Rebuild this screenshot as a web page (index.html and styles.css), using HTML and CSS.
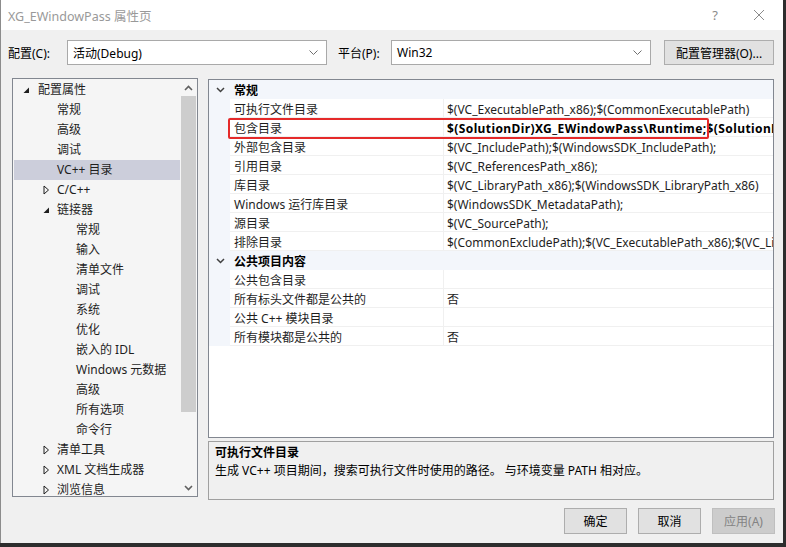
FILE: index.html
```html
<!DOCTYPE html>
<html lang="zh-CN">
<head>
    <meta charset="UTF-8">
    <title>XG_EWindowPass 属性页</title>
    <link rel="stylesheet" href="styles.css">
</head>
<body>
    <div class="window">
        <div class="titlebar">
            <span class="title">XG_EWindowPass 属性页</span>
            <span class="help">?</span>
            <svg class="close" width="12" height="12" viewBox="0 0 12 12"><path d="M1 1L11 11M11 1L1 11" stroke="#8a8a8a" stroke-width="1" fill="none"/></svg>
        </div>

        <div class="toolbar">
            <span class="label cfg">配置(C):</span>
            <div class="combo">
                <span>活动(Debug)</span>
                <svg width="9" height="5" viewBox="0 0 9 5"><path d="M0.5 0.5L4.5 4.5L8.5 0.5" stroke="#707070" fill="none"/></svg>
            </div>
            <span class="label plat">平台(P):</span>
            <div class="combo">
                <span>Win32</span>
                <svg width="9" height="5" viewBox="0 0 9 5"><path d="M0.5 0.5L4.5 4.5L8.5 0.5" stroke="#707070" fill="none"/></svg>
            </div>
            <button class="btn cfg-btn">配置管理器(O)...</button>
        </div>

        <div class="main">
            <div class="tree">
                <div class="tree-list">
                    <div class="node l0"><span class="twisty"><svg width="7" height="7" viewBox="0 0 7 7"><path d="M6 0.5V6H0.5Z" fill="#1e1e1e"/></svg></span>配置属性</div>
                    <div class="node l1"><span class="twisty"></span>常规</div>
                    <div class="node l1"><span class="twisty"></span>高级</div>
                    <div class="node l1"><span class="twisty"></span>调试</div>
                    <div class="node l1 selected"><span class="twisty"></span>VC++ 目录</div>
                    <div class="node l1"><span class="twisty"><svg width="7" height="10" viewBox="0 0 7 10"><path d="M1 1V9L5.5 5Z" stroke="#1e1e1e" fill="none"/></svg></span>C/C++</div>
                    <div class="node l1"><span class="twisty"><svg width="7" height="7" viewBox="0 0 7 7"><path d="M6 0.5V6H0.5Z" fill="#1e1e1e"/></svg></span>链接器</div>
                    <div class="node l2"><span class="twisty"></span>常规</div>
                    <div class="node l2"><span class="twisty"></span>输入</div>
                    <div class="node l2"><span class="twisty"></span>清单文件</div>
                    <div class="node l2"><span class="twisty"></span>调试</div>
                    <div class="node l2"><span class="twisty"></span>系统</div>
                    <div class="node l2"><span class="twisty"></span>优化</div>
                    <div class="node l2"><span class="twisty"></span>嵌入的 IDL</div>
                    <div class="node l2"><span class="twisty"></span>Windows 元数据</div>
                    <div class="node l2"><span class="twisty"></span>高级</div>
                    <div class="node l2"><span class="twisty"></span>所有选项</div>
                    <div class="node l2"><span class="twisty"></span>命令行</div>
                    <div class="node l1"><span class="twisty"><svg width="7" height="10" viewBox="0 0 7 10"><path d="M1 1V9L5.5 5Z" stroke="#1e1e1e" fill="none"/></svg></span>清单工具</div>
                    <div class="node l1"><span class="twisty"><svg width="7" height="10" viewBox="0 0 7 10"><path d="M1 1V9L5.5 5Z" stroke="#1e1e1e" fill="none"/></svg></span>XML 文档生成器</div>
                    <div class="node l1"><span class="twisty"><svg width="7" height="10" viewBox="0 0 7 10"><path d="M1 1V9L5.5 5Z" stroke="#1e1e1e" fill="none"/></svg></span>浏览信息</div>
                </div>
                <div class="scrollbar">
                    <div class="arrow"><svg width="9" height="6" viewBox="0 0 9 6"><path d="M1 5L4.5 1.5L8 5" stroke="#606060" stroke-width="1.6" fill="none"/></svg></div>
                    <div class="track"><div class="thumb"></div></div>
                    <div class="arrow"><svg width="9" height="6" viewBox="0 0 9 6"><path d="M1 1L4.5 4.5L8 1" stroke="#606060" stroke-width="1.6" fill="none"/></svg></div>
                </div>
            </div>

            <div class="side">
                <div class="grid">
                    <div class="row category">
                        <span class="gutter"><svg width="9" height="6" viewBox="0 0 9 6"><path d="M1 1L4.5 4.5L8 1" stroke="#404040" stroke-width="1.5" fill="none"/></svg></span>
                        <span class="cat-name">常规</span>
                    </div>
                    <div class="row"><span class="gutter"></span><span class="name">可执行文件目录</span><span class="value">$(VC_ExecutablePath_x86);$(CommonExecutablePath)</span></div>
                    <div class="row"><span class="gutter"></span><span class="name">包含目录</span><span class="value bold">$(SolutionDir)XG_EWindowPass\Runtime;$(SolutionDir)XG_EWindowPass\Include;$(IncludePath)</span></div>
                    <div class="row"><span class="gutter"></span><span class="name">外部包含目录</span><span class="value">$(VC_IncludePath);$(WindowsSDK_IncludePath);</span></div>
                    <div class="row"><span class="gutter"></span><span class="name">引用目录</span><span class="value">$(VC_ReferencesPath_x86);</span></div>
                    <div class="row"><span class="gutter"></span><span class="name">库目录</span><span class="value">$(VC_LibraryPath_x86);$(WindowsSDK_LibraryPath_x86)</span></div>
                    <div class="row"><span class="gutter"></span><span class="name">Windows 运行库目录</span><span class="value">$(WindowsSDK_MetadataPath);</span></div>
                    <div class="row"><span class="gutter"></span><span class="name">源目录</span><span class="value">$(VC_SourcePath);</span></div>
                    <div class="row"><span class="gutter"></span><span class="name">排除目录</span><span class="value">$(CommonExcludePath);$(VC_ExecutablePath_x86);$(VC_LibraryPath_x86)</span></div>
                    <div class="row category">
                        <span class="gutter"><svg width="9" height="6" viewBox="0 0 9 6"><path d="M1 1L4.5 4.5L8 1" stroke="#404040" stroke-width="1.5" fill="none"/></svg></span>
                        <span class="cat-name">公共项目内容</span>
                    </div>
                    <div class="row"><span class="gutter"></span><span class="name">公共包含目录</span><span class="value"></span></div>
                    <div class="row"><span class="gutter"></span><span class="name">所有标头文件都是公共的</span><span class="value">否</span></div>
                    <div class="row"><span class="gutter"></span><span class="name">公共 C++ 模块目录</span><span class="value"></span></div>
                    <div class="row"><span class="gutter"></span><span class="name">所有模块都是公共的</span><span class="value">否</span></div>
                    <div class="highlight"></div>
                </div>
                <div class="desc">
                    <div class="desc-title">可执行文件目录</div>
                    <div class="desc-text">生成 VC++ 项目期间，搜索可执行文件时使用的路径。 与环境变量 PATH 相对应。</div>
                </div>
            </div>
        </div>

        <div class="footer">
            <button class="btn">确定</button>
            <button class="btn">取消</button>
            <button class="btn disabled">应用(A)</button>
        </div>
    </div>
</body>
</html>
```

FILE: styles.css
```css
body {
    margin: 0;
    width: 786px;
    height: 547px;
    overflow: hidden;
    background: #2d2d2d;
    font-family: "Noto Sans", "Noto Sans CJK SC", sans-serif;
    font-size: 12px;
    color: #000;
}

.window {
    width: 782px;
    height: 543px;
    background: #f0f0f0;
    border-left: 1px solid #8c8c8c;
    overflow: hidden;
}

.titlebar {
    height: 30px;
    background: #fff;
    display: flex;
    align-items: center;
    padding: 0 18px 0 7px;
}

.titlebar .title {
    color: #999;
    font-size: 12.5px;
    flex: 1;
}

.titlebar .help {
    color: #8a8a8a;
    font-size: 13px;
    margin-right: 35px;
}

.toolbar {
    display: flex;
    align-items: center;
    height: 25px;
    margin-top: 10px;
    padding-left: 7px;
}

.label.cfg {
    width: 59px;
}

.label.plat {
    width: 53px;
    margin-left: 11px;
}

.combo {
    width: 260px;
    height: 25px;
    box-sizing: border-box;
    background: #fff;
    border: 1px solid #a9a9a9;
    display: flex;
    align-items: center;
    justify-content: space-between;
    padding: 0 8px 0 5px;
}

.btn {
    font-family: inherit;
    font-size: 12px;
    color: #000;
    background: #e1e1e1;
    border: 1px solid #adadad;
    height: 26px;
    padding: 0;
}

.cfg-btn {
    width: 110px;
    height: 25px;
    margin-left: 13px;
}

.main {
    display: flex;
    margin-top: 13px;
    padding-left: 11px;
}

.tree {
    width: 186px;
    height: 419px;
    box-sizing: border-box;
    border: 1px solid #828790;
    background: #f5f5f5;
    display: flex;
}

.tree-list {
    width: 167px;
    padding-top: 1px;
    overflow: hidden;
}

.node {
    height: 20px;
    line-height: 20px;
    display: flex;
    align-items: center;
    white-space: nowrap;
    color: #1e1e1e;
}

.node.l0 { padding-left: 8px; }
.node.l1 { padding-left: 27px; }
.node.l2 { padding-left: 46px; }

.node.selected {
    background: #cccedb;
    margin-left: 1px;
    padding-left: 26px;
}

.twisty {
    width: 17px;
    height: 20px;
    display: flex;
    align-items: center;
    padding-left: 2px;
    box-sizing: border-box;
}

.node.l1 .twisty { padding-left: 3px; }

.scrollbar {
    width: 17px;
    display: flex;
    flex-direction: column;
}

.scrollbar .arrow {
    height: 17px;
    display: flex;
    align-items: center;
    justify-content: center;
}

.scrollbar .track {
    flex: 1;
    padding: 0 1px;
}

.scrollbar .thumb {
    height: 316px;
    background: #cdcdcd;
}

.side {
    margin-left: 10px;
    width: 566px;
    margin-top: 1px;
}

.grid {
    position: relative;
    height: 359px;
    box-sizing: border-box;
    border: 1px solid #828790;
    background: #fff;
    overflow: hidden;
}

.row {
    display: flex;
    height: 19px;
    line-height: 18px;
    white-space: nowrap;
}

.row .gutter {
    width: 21px;
    flex: none;
    background: #f3f6fb;
    display: flex;
    align-items: center;
    justify-content: center;
    padding-left: 2px;
    box-sizing: border-box;
}

.row .name,
.row .value,
.row .cat-name {
    height: 19px;
    padding-top: 2px;
    box-sizing: border-box;
    overflow: hidden;
}

.row .name {
    width: 214px;
    flex: none;
    padding-left: 4px;
    border-bottom: 1px solid #f0f0f0;
    border-right: 1px solid #f0f0f0;
    color: #1e1e1e;
}

.row .value {
    flex: 1;
    padding-left: 3px;
    border-bottom: 1px solid #f0f0f0;
    color: #1e1e1e;
}

.row .value.bold {
    font-weight: bold;
    letter-spacing: 0.4px;
    color: #000;
}

.row.category {
    background: #f3f6fb;
}

.row .cat-name {
    padding-left: 4px;
    font-weight: bold;
    color: #000;
}

.highlight {
    position: absolute;
    left: 19px;
    top: 38px;
    width: 477px;
    height: 17px;
    border: 2px solid #e52a2a;
    border-radius: 2px;
}

.desc {
    margin-top: 3px;
    height: 59px;
    box-sizing: border-box;
    border: 1px solid #a0a0a0;
    padding: 2px 6px;
}

.desc-title {
    font-weight: bold;
    line-height: 18px;
}

.desc-text {
    line-height: 18px;
}

.footer {
    display: flex;
    justify-content: flex-end;
    gap: 11px;
    margin-top: 8px;
    padding-right: 8px;
}

.footer .btn {
    width: 63px;
}

.footer .btn.disabled {
    background: #cccccc;
    border-color: #bfbfbf;
    color: #838383;
}
```
